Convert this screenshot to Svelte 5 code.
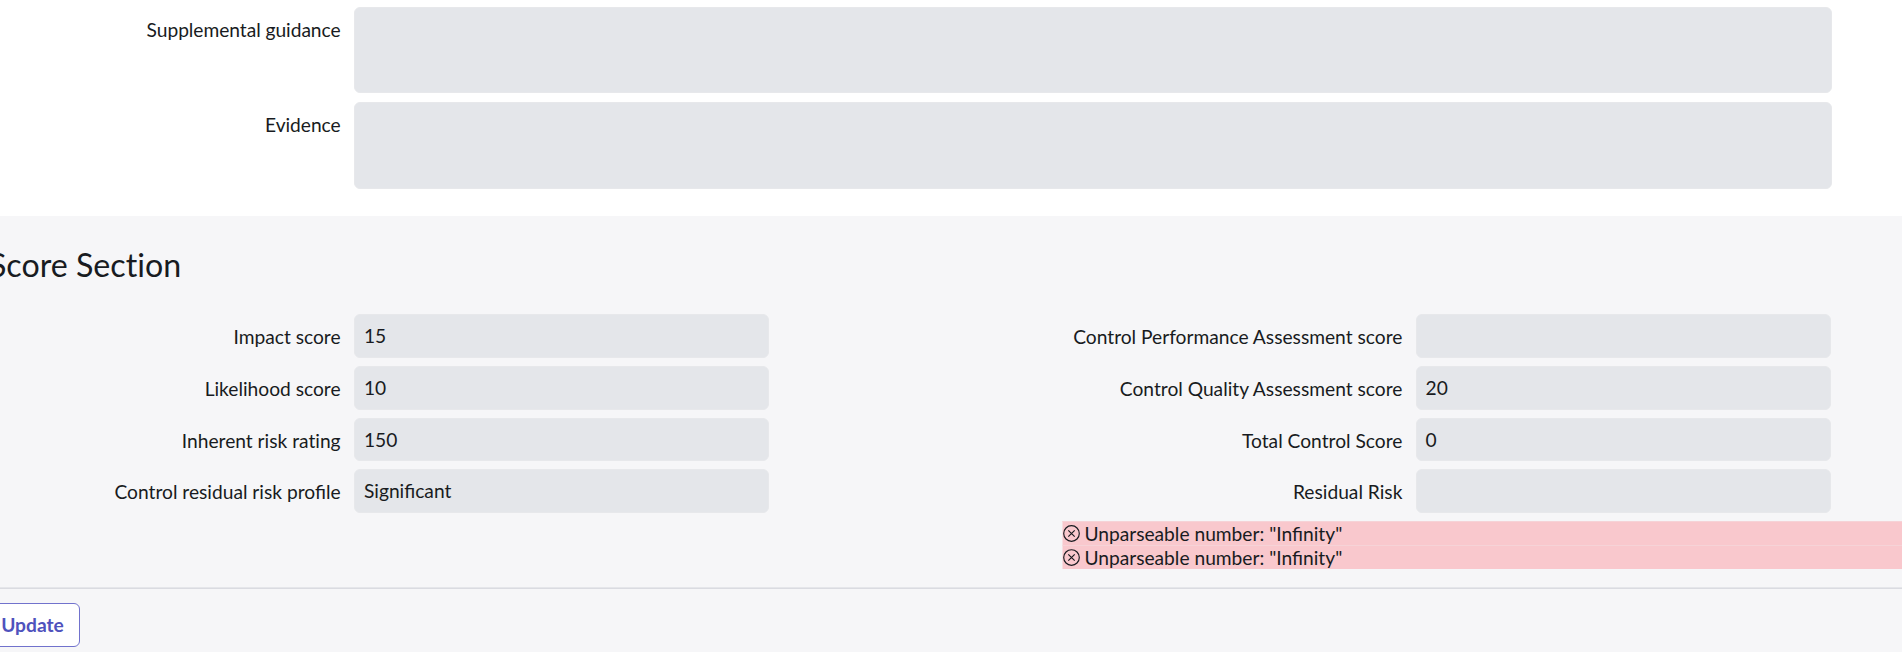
<script>
  const notes = ['Supplemental guidance', 'Evidence'];
  const left = [
    ['Impact score', '15'],
    ['Likelihood score', '10'],
    ['Inherent risk rating', '150'],
    ['Control residual risk profile', 'Significant']
  ];
  const right = [
    ['Control Performance Assessment score', ''],
    ['Control Quality Assessment score', '20'],
    ['Total Control Score', '0'],
    ['Residual Risk', '']
  ];
  const errors = ['Unparseable number: "Infinity"', 'Unparseable number: "Infinity"'];
</script>

{#snippet fields(rows)}
  {#each rows as [label, value]}
    <div class="row">
      <span class="label" class:plain={label.includes('ti')}>{label}</span>
      <div class="field">{value}</div>
    </div>
  {/each}
{/snippet}

<main>
  <section class="notes">
    {#each notes as label}
      <div class="row tall">
        <span class="label">{label}</span>
        <div class="field"></div>
      </div>
    {/each}
  </section>

  <section class="scores">
    <h2 class="plain">Score Section</h2>
    <div class="columns">
      <div class="col">{@render fields(left)}</div>
      <div class="col">
        {@render fields(right)}
        <div class="errors">
          {#each errors as message}
            <div class="error">
              <svg viewBox="0 0 17 17" width="17" height="17" fill="none" stroke="#181a1f" stroke-width="1.15">
                <circle cx="8.5" cy="8.5" r="7.8" />
                <path d="M5.3 5.3l6.4 6.4M11.7 5.3l-6.4 6.4" />
              </svg>
              <span>{message}</span>
            </div>
          {/each}
        </div>
      </div>
    </div>
  </section>

  <footer><button>Update</button></footer>
</main>

<style>
  :global(body) { margin: 0; overflow: hidden; background: #f6f6f8; }
  main {
    width: 1902px;
    height: 652px;
    overflow: hidden;
    box-sizing: border-box;
    background: #f6f6f8;
    color: #181b21;
    font: 19.2px/24px Lato, sans-serif;
  }
  .plain { font-variant-ligatures: none; }
  .notes {
    height: 216px;
    box-sizing: border-box;
    padding: 7px 70.5px 0 0;
    background: #fff;
  }
  .row { display: flex; box-sizing: border-box; }
  .label {
    flex: none;
    width: 340.6px;
    margin-right: 13.4px;
    padding-top: 11px;
    text-align: right;
    white-space: nowrap;
  }
  .tall .label { letter-spacing: -0.04px; font-variant-ligatures: none; }
  .field {
    flex: 1;
    box-sizing: border-box;
    padding: 10px 9px;
    border: 1px solid #e7e8eb;
    border-radius: 6px;
    background: #e4e6ea;
  }
  .tall { height: 86.4px; margin-bottom: 9px; }
  .scores { height: 371px; overflow: hidden; }
  h2 {
    margin: 28px 0 29.3px -11px;
    font-size: 32.2px;
    line-height: 41px;
    font-weight: 400;
  }
  .columns { display: flex; }
  .col { width: 1062.4px; flex: none; }
  .col .row { width: 769px; height: 43.7px; margin-bottom: 8px; }
  .col .field { padding: 9px 9px; }
  .col + .col { width: 839.6px; }
  .col + .col .label { width: 340px; margin-right: 14px; }
  .col + .col .field { padding-left: 8.2px; }
  .errors { width: 840px; }
  .error {
    display: flex;
    align-items: center;
    gap: 4px;
    height: 24px;
    box-sizing: border-box;
    border-top: 1px solid #f6d3d7;
    border-left: 1px solid #f8dfe2;
    background: #f9c8cd;
  }
  footer {
    height: 65px;
    box-sizing: border-box;
    padding-top: 14px;
    border-top: 1px solid #e5e6ea;
    box-shadow: inset 0 1px #dadbe1;
  }
  button {
    display: block;
    width: 96px;
    height: 44px;
    margin: 1px 0 0 -16px;
    padding: 0 0 0 1px;
    border: 1px solid #7172cd;
    border-radius: 6px;
    background: #fff;
    color: #4f52bd;
    font: 700 19.2px/24px Lato, sans-serif;
  }
</style>
